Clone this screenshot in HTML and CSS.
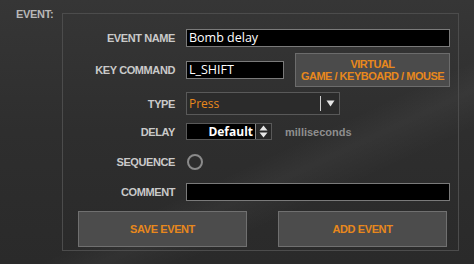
FILE: index.html
```html
<!DOCTYPE html>
<html lang="en">
<head>
  <meta charset="UTF-8" />
  <title>Event Editor</title>
  <link rel="stylesheet" href="styles.css">
</head>
<body>
  <div class="panel">
    <div class="panel-title">EVENT:</div>
    <div class="event-box">
      <div class="row row-name">
        <label>EVENT NAME</label>
        <div class="text-input wide">Bomb delay</div>
      </div>

      <div class="row row-key">
        <label>KEY COMMAND</label>
        <div class="text-input key">L_SHIFT</div>
        <button class="virtual-btn">VIRTUAL<br>GAME / KEYBOARD / MOUSE</button>
      </div>

      <div class="row row-type">
        <label>TYPE</label>
        <div class="select">
          <span class="select-value">Press</span>
          <span class="select-sep"></span>
          <span class="select-arrow">
            <svg width="9" height="7" viewBox="0 0 9 7">
              <path d="M0.5 0.5 L8.5 0.5 L4.5 6.5 Z" fill="#e6e6e6"/>
            </svg>
          </span>
        </div>
      </div>

      <div class="row row-delay">
        <label>DELAY</label>
        <div class="spinner">
          <span class="spinner-value">Default</span>
          <span class="spinner-arrows">
            <svg width="9" height="13" viewBox="0 0 9 13">
              <path d="M4.5 0.5 L8.5 5.5 L0.5 5.5 Z M4.5 12.5 L8.5 7.5 L0.5 7.5 Z" fill="#e6e6e6"/>
            </svg>
          </span>
        </div>
        <span class="unit">milliseconds</span>
      </div>

      <div class="row row-seq">
        <label>SEQUENCE</label>
        <span class="radio"></span>
      </div>

      <div class="row row-comment">
        <label>COMMENT</label>
        <div class="text-input wide"></div>
      </div>

      <div class="actions">
        <button class="action-btn">SAVE EVENT</button>
        <button class="action-btn">ADD EVENT</button>
      </div>
    </div>
  </div>
</body>
</html>
```

FILE: styles.css
```css
body {
  margin: 0;
  width: 474px;
  height: 264px;
  overflow: hidden;
  font-family: 'Liberation Sans', Arial, sans-serif;
  background:
    linear-gradient(155deg, rgba(255,255,255,0) 58%, rgba(255,255,255,0.035) 64%, rgba(255,255,255,0) 72%),
    linear-gradient(180deg, #363636 0%, #2e2e2e 50%, #2a2a2a 100%);
  color: #c8c8c8;
}
.panel {
  display: flex;
  padding: 8px 0 0 16px;
}
.panel-title {
  width: 46px;
  font-size: 11px;
  font-weight: bold;
  letter-spacing: -0.3px;
  color: #b8b8b8;
}
.event-box {
  width: 397px;
  height: 238px;
  margin-top: 5px;
  border: 1px solid #4c4c4c;
  padding-top: 15px;
  box-sizing: border-box;
}
.row {
  display: flex;
  align-items: center;
}
.row label {
  width: 112px;
  margin-right: 11px;
  text-align: right;
  font-size: 11px;
  font-weight: bold;
  letter-spacing: -0.4px;
  color: #cacaca;
}
.row-name { height: 18px; }
.row-key { height: 34px; margin-top: 6px; }
.row-type { height: 23px; margin-top: 5px; }
.row-delay { height: 17px; margin-top: 8px; }
.row-seq { height: 20px; margin-top: 12px; }
.row-comment { height: 18px; margin-top: 11px; }

.text-input {
  height: 18px;
  box-sizing: border-box;
  background: #000;
  border: 1px solid #7a7a7a;
  color: #fff;
  font-family: 'Open Sans', sans-serif;
  font-size: 12.5px;
  line-height: 15px;
  padding-left: 2px;
}
.text-input.wide { width: 264px; }
.text-input.key { width: 98px; }

.virtual-btn {
  width: 155px;
  height: 34px;
  margin-left: 11px;
  background: #4b4b4b;
  border: 1px solid #6c6c6c;
  color: #e8881c;
  font-family: 'Liberation Sans', Arial, sans-serif;
  font-size: 11px;
  font-weight: bold;
  letter-spacing: -0.5px;
  line-height: 12px;
  padding: 0;
}

.select {
  width: 154px;
  height: 23px;
  box-sizing: border-box;
  display: flex;
  align-items: center;
  background: #2b2b2b;
  border: 1px solid #595959;
}
.select-value {
  flex: 1;
  padding-left: 2px;
  color: #e8881c;
  font-family: 'Open Sans', sans-serif;
  font-size: 12px;
}
.select-sep {
  width: 1px;
  height: 15px;
  background: #d0d0d0;
}
.select-arrow {
  width: 18px;
  display: flex;
  justify-content: center;
}

.spinner {
  width: 86px;
  height: 17px;
  box-sizing: border-box;
  display: flex;
  border: 1px solid #595959;
}
.spinner-value {
  width: 68px;
  background: #000;
  color: #fff;
  text-align: right;
  font-family: 'Open Sans', sans-serif;
  font-weight: bold;
  font-size: 12px;
  line-height: 15px;
  padding-right: 2px;
  box-sizing: border-box;
}
.spinner-arrows {
  flex: 1;
  display: flex;
  align-items: center;
  justify-content: center;
  border-left: 1px solid #8a8a8a;
  background: #262626;
}
.unit {
  margin-left: 13px;
  font-size: 11px;
  font-weight: bold;
  color: #8e8e8e;
}

.radio {
  width: 12px;
  height: 12px;
  margin-left: 1px;
  border: 2px solid #8a8a8a;
  border-radius: 50%;
}

.actions {
  display: flex;
  gap: 31px;
  margin-top: 10px;
  padding-left: 15px;
}
.action-btn {
  width: 169px;
  height: 36px;
  background: #4c4c4c;
  border: 1px solid #707070;
  color: #e8881c;
  font-family: 'Liberation Sans', Arial, sans-serif;
  font-size: 11px;
  font-weight: bold;
  letter-spacing: -0.4px;
  padding: 0;
}
```
